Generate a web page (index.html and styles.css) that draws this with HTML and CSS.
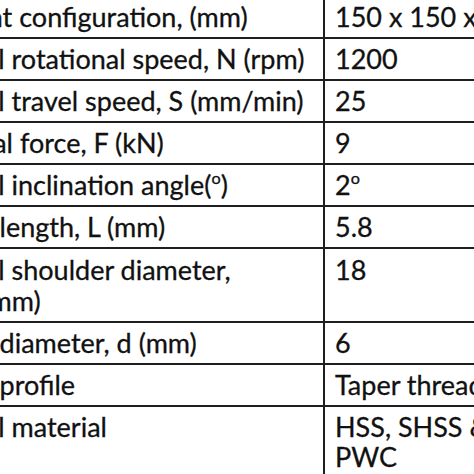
FILE: index.html
```html
<!DOCTYPE html>
<html lang="en">
<head>
<meta charset="utf-8">
<link rel="stylesheet" href="styles.css">
<title>Process parameters</title>
</head>
<body>
<div class="sheet">
  <div class="row"><div class="cell name">Joint configuration, (mm)</div><div class="cell val">150 x 150 x 6</div></div>
  <div class="row"><div class="cell name">Tool rotational speed, N (rpm)</div><div class="cell val">1200</div></div>
  <div class="row"><div class="cell name">Tool travel speed, S (mm/min)</div><div class="cell val">25</div></div>
  <div class="row"><div class="cell name">Axial force, F (kN)</div><div class="cell val">9</div></div>
  <div class="row"><div class="cell name">Tool inclination angle(<span class="deg">o</span>)</div><div class="cell val">2<span class="deg">o</span></div></div>
  <div class="row"><div class="cell name">Pin length, L (mm)</div><div class="cell val">5.8</div></div>
  <div class="row tall"><div class="cell name">Tool shoulder diameter,<br>D (mm)</div><div class="cell val">18</div></div>
  <div class="row"><div class="cell name">Pin diameter, d (mm)</div><div class="cell val">6</div></div>
  <div class="row"><div class="cell name">Pin profile</div><div class="cell val">Taper threaded</div></div>
  <div class="row"><div class="cell name">Tool material</div><div class="cell val">HSS, SHSS &amp;<br>PWC</div></div>
</div>
</body>
</html>
```
FILE: styles.css
```css
html, body {
  margin: 0;
  padding: 0;
  background: #ffffff;
  overflow: hidden;
}
body {
  width: 474px;
  height: 474px;
  font-family: Lato, "Liberation Sans", sans-serif;
  font-size: 27px;
  line-height: 30px;
  color: #111111;
  -webkit-text-stroke: 0.3px #111111;
}
.sheet {
  margin-top: -3px;
  margin-left: -55px;
  width: 700px;
}
.row {
  display: grid;
  grid-template-columns: 380px 1fr;
  border-bottom: 2px solid #1e1e1e;
}
.tall {
  line-height: 31px;
}
.cell {
  padding: 5px 10px;
  white-space: nowrap;
}
.name {
  border-right: 2px solid #1e1e1e;
}
.deg {
  font-size: 0.6em;
  vertical-align: 0.7em;
  line-height: 0;
}
```
